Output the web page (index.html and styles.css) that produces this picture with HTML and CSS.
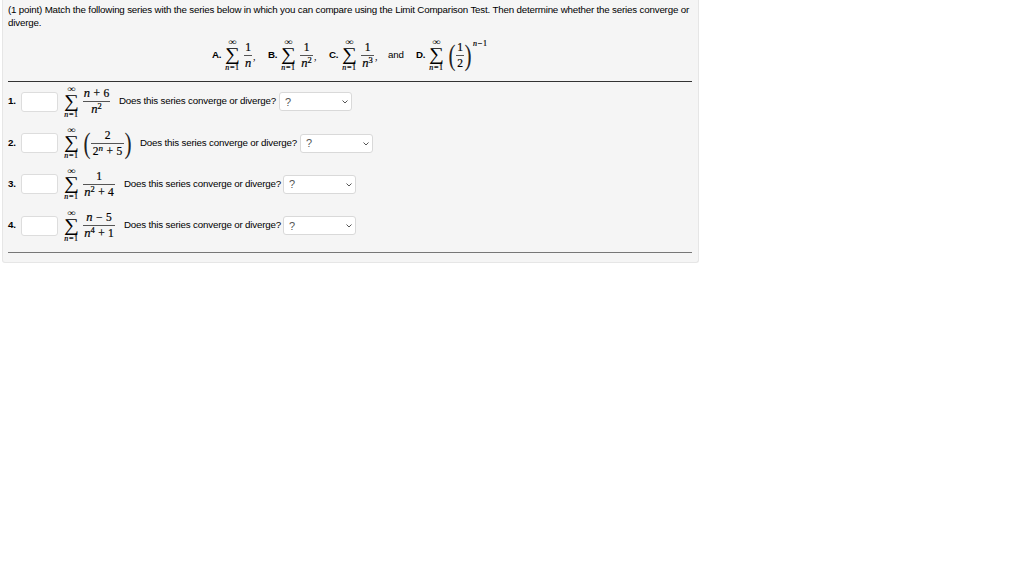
FILE: index.html
```html
<!DOCTYPE html>
<html lang="en">
<head>
    <meta charset="UTF-8">
    <meta name="viewport" content="width=device-width, initial-scale=1.0">
    <title>Limit Comparison Test</title>
    <link rel="stylesheet" href="styles.css">
</head>
<body>
    <form class="problem">
        <p class="intro"><span class="line">(1 point) Match the following series with the series below in which you can compare using the Limit Comparison Test. Then determine whether the series converge or</span> <span class="line short">diverge.</span></p>

        <!-- Series to compare with -->
        <div class="choices">
            <div class="choice choice-a">
                <b>A.</b>
                <span class="sum"><span class="top">∞</span><span class="sigma">∑</span><span class="bottom"><i>n</i>=1</span></span>
                <span class="frac"><span class="num">1</span><span class="den"><i>n</i></span></span>
                <span class="comma">,</span>
            </div>
            <div class="choice choice-b">
                <b>B.</b>
                <span class="sum"><span class="top">∞</span><span class="sigma">∑</span><span class="bottom"><i>n</i>=1</span></span>
                <span class="frac"><span class="num">1</span><span class="den"><i>n</i><sup>2</sup></span></span>
                <span class="comma">,</span>
            </div>
            <div class="choice choice-c">
                <b>C.</b>
                <span class="sum"><span class="top">∞</span><span class="sigma">∑</span><span class="bottom"><i>n</i>=1</span></span>
                <span class="frac"><span class="num">1</span><span class="den"><i>n</i><sup>3</sup></span></span>
                <span class="comma">,</span>
            </div>
            <span class="and">and</span>
            <div class="choice choice-d">
                <b>D.</b>
                <span class="sum"><span class="top">∞</span><span class="sigma">∑</span><span class="bottom"><i>n</i>=1</span></span>
                <span class="paren open"><span>(</span></span>
                <span class="frac"><span class="num">1</span><span class="den">2</span></span>
                <span class="paren"><span>)</span></span>
                <span class="power"><i>n</i>−1</span>
            </div>
        </div>

        <hr>

        <div class="question question-1">
            <b>1.</b>
            <input type="text" class="answer" aria-label="answer 1">
            <span class="sum"><span class="top">∞</span><span class="sigma">∑</span><span class="bottom"><i>n</i>=1</span></span>
            <span class="frac"><span class="num"><i>n</i> + 6</span><span class="den"><i>n</i><sup>2</sup></span></span>
            <label for="q1">Does this series converge or diverge?</label>
            <div class="select-wrapper">
                <select id="q1"><option>?</option><option>converges</option><option>diverges</option></select>
                <svg class="arrow" viewBox="0 0 6 4"><path d="M0.5 0.5L3 3L5.5 0.5"/></svg>
            </div>
        </div>

        <div class="question question-2">
            <b>2.</b>
            <input type="text" class="answer" aria-label="answer 2">
            <span class="sum"><span class="top">∞</span><span class="sigma">∑</span><span class="bottom"><i>n</i>=1</span></span>
            <span class="paren open"><span>(</span></span>
            <span class="frac"><span class="num">2</span><span class="den">2<sup><i>n</i></sup> + 5</span></span>
            <span class="paren"><span>)</span></span>
            <label for="q2">Does this series converge or diverge?</label>
            <div class="select-wrapper">
                <select id="q2"><option>?</option><option>converges</option><option>diverges</option></select>
                <svg class="arrow" viewBox="0 0 6 4"><path d="M0.5 0.5L3 3L5.5 0.5"/></svg>
            </div>
        </div>

        <div class="question question-3">
            <b>3.</b>
            <input type="text" class="answer" aria-label="answer 3">
            <span class="sum"><span class="top">∞</span><span class="sigma">∑</span><span class="bottom"><i>n</i>=1</span></span>
            <span class="frac"><span class="num">1</span><span class="den"><i>n</i><sup>2</sup> + 4</span></span>
            <label for="q3">Does this series converge or diverge?</label>
            <div class="select-wrapper">
                <select id="q3"><option>?</option><option>converges</option><option>diverges</option></select>
                <svg class="arrow" viewBox="0 0 6 4"><path d="M0.5 0.5L3 3L5.5 0.5"/></svg>
            </div>
        </div>

        <div class="question question-4">
            <b>4.</b>
            <input type="text" class="answer" aria-label="answer 4">
            <span class="sum"><span class="top">∞</span><span class="sigma">∑</span><span class="bottom"><i>n</i>=1</span></span>
            <span class="frac"><span class="num"><i>n</i> − 5</span><span class="den"><i>n</i><sup>4</sup> + 1</span></span>
            <label for="q4">Does this series converge or diverge?</label>
            <div class="select-wrapper">
                <select id="q4"><option>?</option><option>converges</option><option>diverges</option></select>
                <svg class="arrow" viewBox="0 0 6 4"><path d="M0.5 0.5L3 3L5.5 0.5"/></svg>
            </div>
        </div>

        <hr class="last">
    </form>
</body>
</html>
```

FILE: styles.css
```css
* {
    box-sizing: border-box;
}

body {
    margin: 0;
    background: #fff;
    color: #000;
    font-family: "Liberation Sans", Arial, sans-serif;
    font-size: 9.75px;
    letter-spacing: -0.19px;
}

.problem {
    width: 697px;
    height: 263px;
    margin-left: 2px;
    padding: 3px 6px 0 5px;
    background: #f5f5f5;
    border: 1px solid #e6e6e6;
    border-top: 0;
    border-radius: 0 0 3px 3px;
}

.intro {
    margin: 0;
    line-height: 13px;
}

/* both lines keep an exact measure */
.line {
    display: block;
    width: 681px;
    white-space: nowrap;
    text-align-last: justify;
}

.line.short {
    text-align-last: left;
}

.choices {
    display: flex;
    align-items: center;
    height: 42px;
    margin: 5px 0 0 204px;
}

.choice {
    display: flex;
    align-items: center;
}

.choice b {
    width: 13px;
}

.choice-a {
    width: 56px;
}

.choice-b {
    width: 61px;
}

.choice-c {
    width: 59px;
}

.and {
    width: 28px;
}

b, .and {
    margin-bottom: 1px;
}

hr {
    height: 1px;
    margin: 5px 0 0;
    border: 0;
    background: #333;
}

.last {
    background: #777;
}

.question {
    display: flex;
    align-items: center;
    height: 41.4px;
}

.question-1 {
    margin-top: -1px;
}

.question b {
    width: 13px;
    margin-bottom: 2px;
}

.answer {
    width: 37px;
    height: 20px;
    margin: 0 6px 0 0;
    padding: 0 4px;
    border: 1px solid #ddd;
    border-radius: 3px;
    background: #fff;
}

.question label {
    width: 156px;
    margin: 0 0 2px 9px;
    white-space: nowrap;
    letter-spacing: -0.18px;
}

.question-2 label {
    margin-left: 8px;
}

.select-wrapper {
    position: relative;
    width: 73px;
    height: 19px;
    margin-left: 4px;
}

.question-3 .select-wrapper, .question-4 .select-wrapper {
    margin-left: 3px;
}

select {
    -webkit-appearance: none;
    appearance: none;
    display: block;
    width: 73px;
    height: 19px;
    padding: 0 4px 0 5px;
    border: 1px solid #d9d9d9;
    border-radius: 3px;
    background: #fff;
    color: #555;
    font-family: "Liberation Sans", Arial, sans-serif;
    font-size: 11px;
}

.arrow {
    position: absolute;
    right: 4px;
    top: 8px;
    width: 6px;
    height: 4px;
    fill: none;
    stroke: #555;
}

/* Math */
.sum, .frac, .paren, .power, .comma {
    font-family: "Liberation Serif", "Times New Roman", serif;
    white-space: nowrap;
    letter-spacing: 0;
}

.sum {
    display: flex;
    flex-direction: column;
    align-items: center;
    width: 15px;
    height: 32px;
}

.top {
    height: 6px;
    font-size: 9.5px;
    line-height: 6px;
    transform: scaleX(1.25);
}

.sigma {
    height: 19px;
    font-size: 18px;
    line-height: 19px;
    transform: scaleX(1.15);
}

.bottom {
    height: 8px;
    font-size: 8px;
    line-height: 8px;
    letter-spacing: 0.6px;
    -webkit-text-stroke: 0.2px;
}

.frac {
    display: flex;
    flex-direction: column;
    margin-left: 4px;
    font-size: 11.5px;
    word-spacing: 0.6px;
    text-align: center;
    -webkit-text-stroke: 0.2px;
}

.num {
    height: 16px;
    line-height: 14px;
    border-bottom: 1px solid #555;
}

.den {
    height: 15px;
    line-height: 14px;
}

.frac i {
    font-size: 12.5px;
}

sup {
    font-size: 8.5px;
    line-height: 0;
    vertical-align: 4px;
}

.frac sup i {
    font-size: 9px;
}

.choice-a .frac {
    width: 8px;
}

.choice-b .frac, .choice-c .frac {
    width: 13px;
}

.choice-d .frac {
    width: 8px;
    margin: 0;
}

.question-1 .frac {
    width: 27px;
}

.question-2 .frac {
    width: 33px;
    margin: 0;
}

.question-3 .frac, .question-4 .frac {
    width: 32px;
}

.comma {
    margin: 2px 0 0 1px;
    font-size: 10px;
}

.paren {
    display: flex;
    justify-content: center;
    width: 8px;
    height: 30px;
    color: #222;
    font-size: 25px;
    line-height: 30px;
}

.paren.open {
    margin-left: 4px;
}

.paren span {
    transform: scale(0.85, 1.2);
}

.power {
    margin: 0 0 24px 1px;
    font-size: 8px;
    letter-spacing: 0.8px;
    -webkit-text-stroke: 0.2px;
}
```
